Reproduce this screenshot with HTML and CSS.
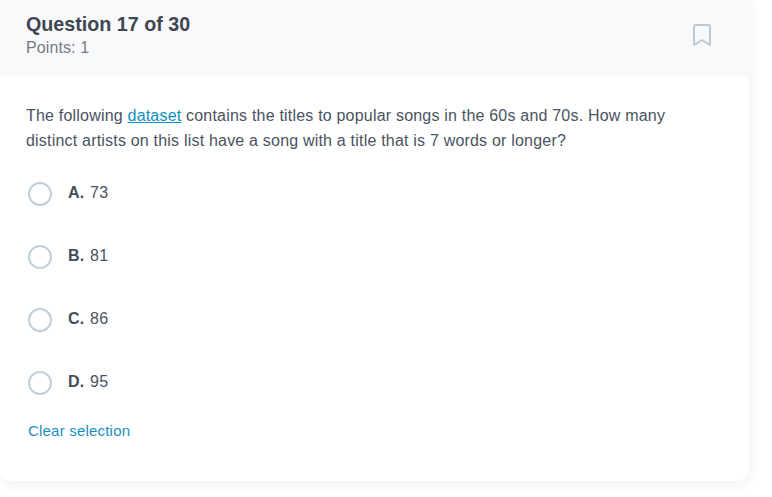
FILE: index.html
```html
<!DOCTYPE html>
<html lang="en">
<head>
<meta charset="UTF-8" />
<meta name="viewport" content="width=device-width, initial-scale=1.0"/>
<title>Question 17 of 30</title>
<link rel="stylesheet" href="styles.css">
</head>
<body>

<div class="card">
<div class="card-header">
<div>
<h2>Question 17 of 30</h2>
<div class="points">Points: 1</div>
</div>
<svg class="bookmark" width="20" height="24" viewBox="0 0 20 24" fill="none" stroke="#bccad6" stroke-width="2" stroke-linejoin="round">
<path d="M2 22V4a2 2 0 0 1 2-2h12a2 2 0 0 1 2 2v18l-8-5z"/>
</svg>
</div>

<div class="card-body">
<p class="question">The following <a href="#">dataset</a> contains the titles to popular songs in the 60s and 70s. How many distinct artists on this list have a song with a title that is 7 words or longer?</p>

<div class="options">
<div class="option"><span class="radio"></span><span><b>A.</b> <span class="value">73</span></span></div>
<div class="option"><span class="radio"></span><span><b>B.</b> <span class="value">81</span></span></div>
<div class="option"><span class="radio"></span><span><b>C.</b> <span class="value">86</span></span></div>
<div class="option"><span class="radio"></span><span><b>D.</b> <span class="value">95</span></span></div>
</div>

<a class="clear" href="#">Clear selection</a>
</div>
</div>

</body>
</html>
```

FILE: styles.css
```css
* {
box-sizing: border-box;
}
body {
margin: 0;
min-height: 100vh;
background-color: #fff;
color: #4a5360;
font-family: 'Liberation Sans', Arial, sans-serif;
overflow: hidden;
}

.card {
width: 749px;
height: 489px;
margin-top: -8px;
background-color: #fff;
border-radius: 12px;
box-shadow: 0 2px 14px rgba(30, 40, 60, 0.08);
overflow: hidden;
}

.card-header {
display: flex;
justify-content: space-between;
align-items: center;
height: 85px;
padding: 8px 37px 6px 26px;
background-color: #f8f9fb;
}

.card-header h2 {
margin: 0;
font-size: 19.7px;
line-height: 24px;
font-weight: bold;
color: #3f4650;
}

.points {
font-size: 16px;
line-height: 24px;
letter-spacing: 0.1px;
color: #737b85;
}

.bookmark {
display: block;
margin-bottom: 2px;
}

.card-body {
padding: 26px 26px 0;
}

.question {
margin: 0;
max-width: 660px;
font-size: 16px;
line-height: 25px;
letter-spacing: 0.2px;
}

.question a {
color: #0c8fc2;
}

.options {
margin-top: 8px;
padding-left: 2px;
display: flex;
flex-direction: column;
}

.option {
display: flex;
align-items: center;
gap: 16px;
height: 63px;
font-size: 16px;
letter-spacing: 0.2px;
}

.option b {
color: #454e5b;
}

.value {
margin-left: 1px;
}

.radio {
width: 24px;
height: 24px;
margin-top: 3px;
border: 2px solid #c0ced9;
border-radius: 50%;
}

.clear {
display: block;
margin-top: 8px;
padding-left: 2px;
font-size: 15px;
line-height: 20px;
letter-spacing: 0.2px;
color: #1a8fc4;
text-decoration: none;
}
```
